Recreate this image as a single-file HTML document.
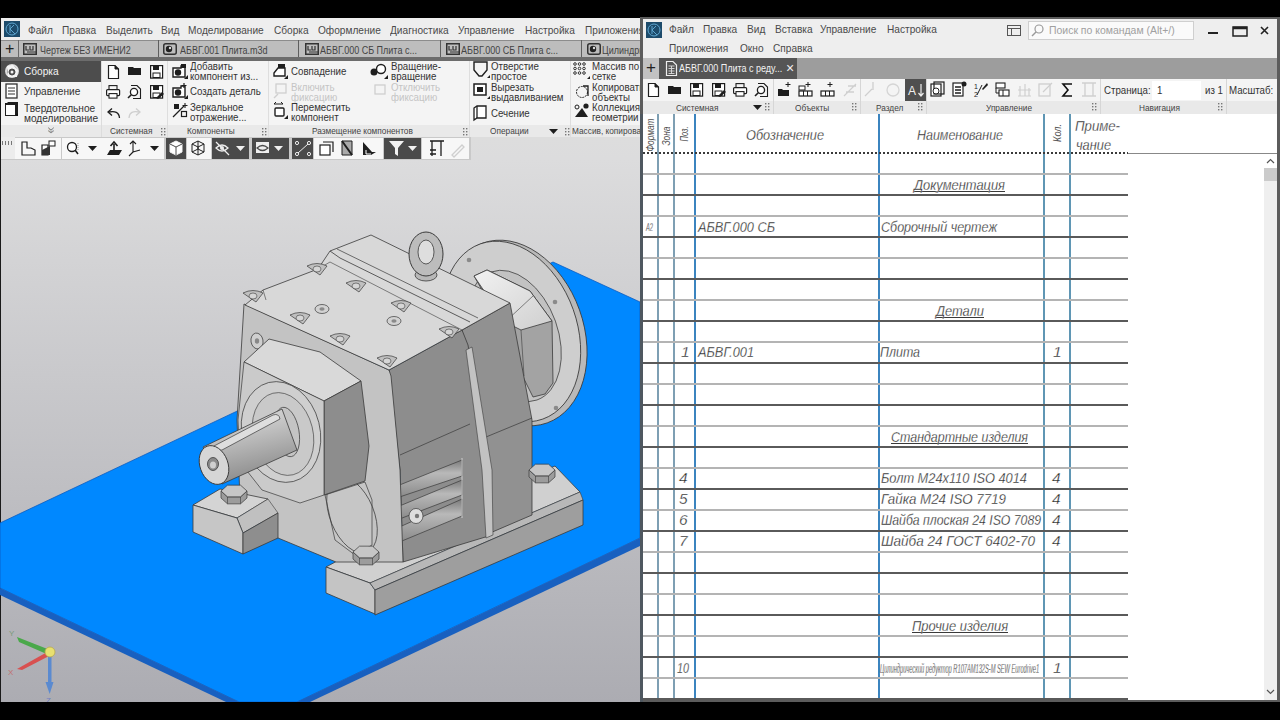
<!DOCTYPE html>
<html><head><meta charset="utf-8">
<style>
*{margin:0;padding:0;box-sizing:border-box}
html,body{width:1280px;height:720px;overflow:hidden;background:#000;font-family:"Liberation Sans",sans-serif}
.a{position:absolute}
.t{position:absolute;white-space:nowrap;transform-origin:0 50%}
.g{position:absolute;white-space:nowrap;transform-origin:0 50%;font-style:italic;color:#2a2a2a;-webkit-text-stroke:0.3px #fff}
.gr{position:absolute;white-space:nowrap;transform-origin:50% 50%;font-style:italic;color:#2a2a2a}
svg{position:absolute;left:0;top:0}
</style></head><body>

<div class="a" style="left:0px;top:0px;width:640px;height:18px;background:#000;"></div>
<div class="a" style="left:0px;top:18px;width:1px;height:684px;background:#1a1a1a;"></div>
<div class="a" style="left:1px;top:18px;width:639px;height:22px;background:#eeeeee;"></div>
<div class="a" style="left:4px;top:21px;width:16px;height:16px;background:#1d4b6b;"></div>
<svg width="1280" height="720" style="pointer-events:none"><circle cx="12" cy="29" r="6" fill="none" stroke="#5ea6d0" stroke-width="1"></circle><path d="M10 25 V33 M10 29 L14 25 M10 29 L15 34" stroke="#5ea6d0" stroke-width="1" fill="none"></path></svg>
<div class="t" style="left:28px;top:23.9px;font-size:11px;line-height:13.2px;color:#4a4a4a;transform:scaleX(0.92);">Файл</div>
<div class="t" style="left:62px;top:23.9px;font-size:11px;line-height:13.2px;color:#4a4a4a;transform:scaleX(0.92);">Правка</div>
<div class="t" style="left:106px;top:23.9px;font-size:11px;line-height:13.2px;color:#4a4a4a;transform:scaleX(0.92);">Выделить</div>
<div class="t" style="left:161px;top:23.9px;font-size:11px;line-height:13.2px;color:#4a4a4a;transform:scaleX(0.92);">Вид</div>
<div class="t" style="left:188px;top:23.9px;font-size:11px;line-height:13.2px;color:#4a4a4a;transform:scaleX(0.92);">Моделирование</div>
<div class="t" style="left:274px;top:23.9px;font-size:11px;line-height:13.2px;color:#4a4a4a;transform:scaleX(0.92);">Сборка</div>
<div class="t" style="left:318px;top:23.9px;font-size:11px;line-height:13.2px;color:#4a4a4a;transform:scaleX(0.92);">Оформление</div>
<div class="t" style="left:390px;top:23.9px;font-size:11px;line-height:13.2px;color:#4a4a4a;transform:scaleX(0.92);">Диагностика</div>
<div class="t" style="left:458px;top:23.9px;font-size:11px;line-height:13.2px;color:#4a4a4a;transform:scaleX(0.92);">Управление</div>
<div class="t" style="left:525px;top:23.9px;font-size:11px;line-height:13.2px;color:#4a4a4a;transform:scaleX(0.92);">Настройка</div>
<div class="t" style="left:585px;top:23.9px;font-size:11px;line-height:13.2px;color:#4a4a4a;transform:scaleX(0.92);">Приложения</div>
<div class="a" style="left:1px;top:40px;width:639px;height:17px;background:#bdbdbd;"></div>
<div class="a" style="left:1px;top:40px;width:639px;height:1px;background:#8c8c8c;"></div>
<div class="a" style="left:18px;top:40px;width:1px;height:17px;background:#6a6a6a;"></div>
<div class="t" style="left:5px;top:40px;font-size:16px;line-height:17px;color:#222">+</div>
<svg width="640" height="60"><rect x="23.75" y="43.75" width="12.5" height="10.5" fill="none" stroke="#333" stroke-width="1.5"></rect><path d="M26 46 V50 H29 M30 46 V50 H33 V46 M27 52 H36" fill="none" stroke="#333" stroke-width="1.2"></path></svg>
<div class="t" style="left:40px;top:44.5px;font-size:10px;line-height:12.0px;color:#444;transform:scaleX(0.9);">Чертеж БЕЗ ИМЕНИ2</div>
<div class="a" style="left:158px;top:40px;width:1px;height:17px;background:#5e5e5e;"></div>
<svg width="640" height="60"><rect x="163.75" y="43.75" width="12.5" height="10.5" rx="2" fill="none" stroke="#333" stroke-width="1.5"></rect><circle cx="169" cy="49" r="3.2" fill="#222"></circle><circle cx="170" cy="48" r="1.2" fill="#ddd"></circle></svg>
<div class="t" style="left:180px;top:44.5px;font-size:10px;line-height:12.0px;color:#444;transform:scaleX(0.9);">АБВГ.001 Плита.m3d</div>
<div class="a" style="left:298px;top:40px;width:1px;height:17px;background:#5e5e5e;"></div>
<svg width="640" height="60"><rect x="305.75" y="43.75" width="12.5" height="10.5" fill="none" stroke="#333" stroke-width="1.5"></rect><path d="M308 46 V50 H311 M312 46 V50 H315 V46 M309 52 H318" fill="none" stroke="#333" stroke-width="1.2"></path></svg>
<div class="t" style="left:320px;top:44.5px;font-size:10px;line-height:12.0px;color:#444;transform:scaleX(0.9);">АБВГ.000 СБ Плита с...</div>
<div class="a" style="left:440px;top:40px;width:1px;height:17px;background:#5e5e5e;"></div>
<svg width="640" height="60"><rect x="446.75" y="43.75" width="12.5" height="10.5" fill="none" stroke="#333" stroke-width="1.5"></rect><path d="M449 46 V50 H452 M453 46 V50 H456 V46 M450 52 H459" fill="none" stroke="#333" stroke-width="1.2"></path></svg>
<div class="t" style="left:461px;top:44.5px;font-size:10px;line-height:12.0px;color:#444;transform:scaleX(0.9);">АБВГ.000 СБ Плита с...</div>
<div class="a" style="left:581px;top:40px;width:1px;height:17px;background:#5e5e5e;"></div>
<svg width="640" height="60"><rect x="587.75" y="43.75" width="12.5" height="10.5" rx="2" fill="none" stroke="#333" stroke-width="1.5"></rect><circle cx="593" cy="49" r="3.2" fill="#222"></circle><circle cx="594" cy="48" r="1.2" fill="#ddd"></circle></svg>
<div class="t" style="left:602px;top:44.5px;font-size:10px;line-height:12.0px;color:#444;transform:scaleX(0.9);">Цилиндрический</div>
<div class="a" style="left:700px;top:40px;width:1px;height:17px;background:#5e5e5e;"></div>
<div class="a" style="left:1px;top:57px;width:639px;height:4px;background:#6c6c6c;"></div>
<div class="a" style="left:1px;top:61px;width:639px;height:76px;background:#f4f4f4;"></div>
<div class="a" style="left:1px;top:125px;width:639px;height:12px;background:#e9e9e9;"></div>
<div class="a" style="left:1px;top:61px;width:100px;height:21px;background:#4d4d4d;"></div>
<div class="a" style="left:101px;top:61px;width:1px;height:76px;background:#dcdcdc;"></div>
<div class="a" style="left:167px;top:61px;width:1px;height:76px;background:#dedede;"></div>
<div class="a" style="left:268px;top:61px;width:1px;height:76px;background:#dedede;"></div>
<div class="a" style="left:469px;top:61px;width:1px;height:76px;background:#dedede;"></div>
<div class="a" style="left:570px;top:61px;width:1px;height:76px;background:#dedede;"></div>
<div class="t" style="left:24px;top:65.4px;font-size:11px;line-height:13.2px;color:#f4f4f4;transform:scaleX(0.92);">Сборка</div>
<div class="t" style="left:24px;top:85.4px;font-size:11px;line-height:13.2px;color:#333;transform:scaleX(0.92);">Управление</div>
<div class="t" style="left:24px;top:102.4px;font-size:11px;line-height:13.2px;color:#333;transform:scaleX(0.92);">Твердотельное</div>
<div class="t" style="left:24px;top:111.9px;font-size:11px;line-height:13.2px;color:#333;transform:scaleX(0.92);">моделирование</div>
<div class="t" style="left:48px;top:124.6px;font-size:9px;line-height:10.8px;color:#777;transform:scaleX(1);transform:rotate(90deg);transform-origin:50% 50%">»</div>
<div class="a" style="left:5px;top:64px;width:14px;height:14px;background:none;border:2px solid #ddd;border-radius:50%"></div>
<div class="a" style="left:6px;top:85px;width:11px;height:13px;background:#f4f4f4;border:1.5px solid #555"></div>
<div class="a" style="left:5px;top:103px;width:13px;height:13px;background:#fff;border:2px solid #111;box-shadow:inset 3px 3px 0 #111"></div>
<div class="t" style="left:110px;top:125.6px;font-size:9px;line-height:10.8px;color:#444;transform:scaleX(0.92);">Системная</div>
<div class="t" style="left:187px;top:125.6px;font-size:9px;line-height:10.8px;color:#444;transform:scaleX(0.92);">Компоненты</div>
<div class="t" style="left:312px;top:125.6px;font-size:9px;line-height:10.8px;color:#444;transform:scaleX(0.92);">Размещение компонентов</div>
<div class="t" style="left:490px;top:125.6px;font-size:9px;line-height:10.8px;color:#444;transform:scaleX(0.92);">Операции</div>
<div class="t" style="left:572px;top:125.6px;font-size:9px;line-height:10.8px;color:#444;transform:scaleX(0.92);">Массив, копирование</div>
<div class="t" style="left:190px;top:61.0px;font-size:10px;line-height:12.0px;color:#333;transform:scaleX(0.97);">Добавить</div>
<div class="t" style="left:190px;top:71.0px;font-size:10px;line-height:12.0px;color:#333;transform:scaleX(0.97);">компонент из...</div>
<div class="t" style="left:190px;top:86.0px;font-size:10px;line-height:12.0px;color:#333;transform:scaleX(0.97);">Создать деталь</div>
<div class="t" style="left:190px;top:102.0px;font-size:10px;line-height:12.0px;color:#333;transform:scaleX(0.97);">Зеркальное</div>
<div class="t" style="left:190px;top:112.0px;font-size:10px;line-height:12.0px;color:#333;transform:scaleX(0.97);">отражение...</div>
<div class="t" style="left:291px;top:66.0px;font-size:10px;line-height:12.0px;color:#333;transform:scaleX(0.97);">Совпадение</div>
<div class="t" style="left:291px;top:82.0px;font-size:10px;line-height:12.0px;color:#c4c4c4;transform:scaleX(0.97);">Включить</div>
<div class="t" style="left:291px;top:92.0px;font-size:10px;line-height:12.0px;color:#c4c4c4;transform:scaleX(0.97);">фиксацию</div>
<div class="t" style="left:291px;top:102.0px;font-size:10px;line-height:12.0px;color:#333;transform:scaleX(0.97);">Переместить</div>
<div class="t" style="left:291px;top:112.0px;font-size:10px;line-height:12.0px;color:#333;transform:scaleX(0.97);">компонент</div>
<div class="t" style="left:391px;top:61.0px;font-size:10px;line-height:12.0px;color:#333;transform:scaleX(0.97);">Вращение-</div>
<div class="t" style="left:391px;top:71.0px;font-size:10px;line-height:12.0px;color:#333;transform:scaleX(0.97);">вращение</div>
<div class="t" style="left:391px;top:82.0px;font-size:10px;line-height:12.0px;color:#c4c4c4;transform:scaleX(0.97);">Отключить</div>
<div class="t" style="left:391px;top:92.0px;font-size:10px;line-height:12.0px;color:#c4c4c4;transform:scaleX(0.97);">фиксацию</div>
<div class="t" style="left:491px;top:61.0px;font-size:10px;line-height:12.0px;color:#333;transform:scaleX(0.97);">Отверстие</div>
<div class="t" style="left:491px;top:71.0px;font-size:10px;line-height:12.0px;color:#333;transform:scaleX(0.97);">простое</div>
<div class="t" style="left:491px;top:82.0px;font-size:10px;line-height:12.0px;color:#333;transform:scaleX(0.97);">Вырезать</div>
<div class="t" style="left:491px;top:92.0px;font-size:10px;line-height:12.0px;color:#333;transform:scaleX(0.97);">выдавливанием</div>
<div class="t" style="left:491px;top:108.0px;font-size:10px;line-height:12.0px;color:#333;transform:scaleX(0.97);">Сечение</div>
<div class="t" style="left:592px;top:61.0px;font-size:10px;line-height:12.0px;color:#333;transform:scaleX(0.97);">Массив по</div>
<div class="t" style="left:592px;top:71.0px;font-size:10px;line-height:12.0px;color:#333;transform:scaleX(0.97);">сетке</div>
<div class="t" style="left:592px;top:82.0px;font-size:10px;line-height:12.0px;color:#333;transform:scaleX(0.97);">Копировать</div>
<div class="t" style="left:592px;top:92.0px;font-size:10px;line-height:12.0px;color:#333;transform:scaleX(0.97);">объекты</div>
<div class="t" style="left:592px;top:102.0px;font-size:10px;line-height:12.0px;color:#333;transform:scaleX(0.97);">Коллекция</div>
<div class="t" style="left:592px;top:112.0px;font-size:10px;line-height:12.0px;color:#333;transform:scaleX(0.97);">геометрии</div>
<div class="a" style="left:1px;top:137px;width:639px;height:565px;background:linear-gradient(#dddddd,#dcdcdd 4%,#acacb2);"></div>
<div class="a" style="left:1px;top:137px;width:470px;height:23px;background:#c9c9c9;"></div>
<div class="a" style="left:1px;top:137px;width:14px;height:22px;background:#ececec;"></div>
<div class="a" style="left:15px;top:138px;width:46px;height:21px;background:#f7f7f7;"></div>
<div class="a" style="left:62px;top:138px;width:102px;height:21px;background:#f7f7f7;"></div>
<div class="a" style="left:166px;top:138px;width:20px;height:21px;background:#4a4a4a;"></div>
<div class="a" style="left:187px;top:138px;width:24px;height:21px;background:#f7f7f7;"></div>
<div class="a" style="left:212px;top:138px;width:37px;height:21px;background:#4a4a4a;"></div>
<div class="a" style="left:252px;top:138px;width:37px;height:21px;background:#4a4a4a;"></div>
<div class="a" style="left:292px;top:138px;width:21px;height:21px;background:#4a4a4a;"></div>
<div class="a" style="left:314px;top:138px;width:69px;height:21px;background:#f7f7f7;"></div>
<div class="a" style="left:384px;top:138px;width:37px;height:21px;background:#4a4a4a;"></div>
<div class="a" style="left:422px;top:138px;width:47px;height:21px;background:#f7f7f7;"></div>
<div class="a" style="left:2px;top:141px;width:11px;height:4px;background:none;background:repeating-linear-gradient(90deg,#777 0 1px,transparent 1px 3px)"></div>
<svg width="640" height="170"><path d="M108.5 65.5 H115 L118.5 69 V78.5 H108.5 Z" fill="#fff" stroke="#1e1e1e" stroke-width="1.2"></path><path d="M115 65.5 V69 H118.5" fill="#1e1e1e" stroke="#1e1e1e"></path><path d="M128 67 H133 L134 68 H141 V75 H128 Z" fill="#1e1e1e"></path><rect x="150.6" y="65.6" width="12" height="12.5" fill="#fff" stroke="#1e1e1e" stroke-width="1.2"></rect><rect x="153" y="66" width="6" height="4" fill="#1e1e1e"></rect><rect x="153" y="73" width="7" height="4.5" fill="none" stroke="#1e1e1e" stroke-width="1"></rect><rect x="109" y="85.6" width="8" height="4" fill="none" stroke="#1e1e1e" stroke-width="1.1"></rect><rect x="106.6" y="89.6" width="13" height="6" rx="1" fill="#fff" stroke="#1e1e1e" stroke-width="1.2"></rect><rect x="109" y="93.6" width="8" height="4.5" fill="#fff" stroke="#1e1e1e" stroke-width="1.1"></rect><path d="M131 85.5 H137 L140.5 89 V98.5 H133" fill="none" stroke="#1e1e1e" stroke-width="1.1"></path><circle cx="134" cy="92" r="3.6" fill="#fff" stroke="#1e1e1e" stroke-width="1.3"></circle><path d="M131.3 94.7 L128 98" stroke="#1e1e1e" stroke-width="1.6"></path><rect x="150.6" y="85.6" width="12" height="12.5" fill="#fff" stroke="#1e1e1e" stroke-width="1.2"></rect><rect x="153" y="86" width="6" height="4" fill="#1e1e1e"></rect><rect x="153" y="93" width="7" height="4.5" fill="none" stroke="#1e1e1e" stroke-width="1"></rect><path d="M156 98 L162 92 L164 94 L158 99 Z" fill="#1e1e1e"></path><path d="M119.5 118 C119 112 115 111 109 112" fill="none" stroke="#1e1e1e" stroke-width="1.3"></path><path d="M112 108.5 L108 112 L112 115.5" fill="none" stroke="#1e1e1e" stroke-width="1.3"></path><path d="M129 118 C129.5 112 133 111 139 112" fill="none" stroke="#cfcfcf" stroke-width="1.3"></path><path d="M136 108.5 L140 112 L136 115.5" fill="none" stroke="#cfcfcf" stroke-width="1.3"></path><path d="M173 68 H181 V66 H185 V77 H173 Z" fill="#fff" stroke="#1e1e1e" stroke-width="1.4"></path><circle cx="178" cy="72.5" r="3.2" fill="#1e1e1e"></circle><path d="M184 79 L188 75 V79 Z" fill="#1e1e1e"></path><rect x="181" y="64" width="5" height="4" fill="#1e1e1e"></rect><path d="M173 88 H181 V86 H185 V97 H173 Z" fill="#fff" stroke="#1e1e1e" stroke-width="1.4"></path><circle cx="178" cy="92.5" r="3.2" fill="#1e1e1e"></circle><path d="M184 99 L188 95 V99 Z" fill="#1e1e1e"></path><path d="M184 83 V88 M181.5 85.5 H186.5" stroke="#1e1e1e" stroke-width="1.2"></path><rect x="174" y="104" width="5" height="5" fill="#1e1e1e"></rect><path d="M173 117 L184 106" stroke="#1e1e1e" stroke-width="1.3"></path><rect x="181.5" y="111.5" width="5" height="5" fill="none" stroke="#1e1e1e" stroke-width="1.2"></rect><path d="M185 103 V108 M182.5 105.5 H187.5" stroke="#1e1e1e" stroke-width="1.1"></path><path d="M274 73 L278 68 H285 V76 H274 Z" fill="#fff" stroke="#1e1e1e" stroke-width="1.4"></path><path d="M278 64 H285 V68 H278 Z" fill="#1e1e1e"></path><path d="M284 79 L288 75 V79 Z" fill="#1e1e1e"></path><rect x="276" y="84" width="10" height="9" fill="none" stroke="#cfcfcf" stroke-width="1.3"></rect><path d="M274 98 L278 94" stroke="#cfcfcf" stroke-width="1.5"></path><path d="M274 104 H283 M274 104 L276 102 M283 104 L281 102" stroke="#1e1e1e" stroke-width="1"></path><rect x="275" y="108" width="9" height="8" rx="1" fill="#fff" stroke="#1e1e1e" stroke-width="1.4"></rect><path d="M284 119 L288 115 V119 Z" fill="#1e1e1e"></path><circle cx="374" cy="72" r="3.5" fill="#1e1e1e"></circle><circle cx="381" cy="69" r="4.5" fill="#fff" stroke="#1e1e1e" stroke-width="1.4"></circle><path d="M384 79 L388 75 V79 Z" fill="#1e1e1e"></path><rect x="375" y="85" width="10" height="9" fill="none" stroke="#cfcfcf" stroke-width="1.3"></rect><path d="M474 62 H487 V70 L482 76 H479 L474 70 Z" fill="none" stroke="#1e1e1e" stroke-width="1.4"></path><path d="M487 78 L490 75 V78 Z" fill="#1e1e1e"></path><rect x="474" y="84" width="12" height="11" fill="#fff" stroke="#1e1e1e" stroke-width="1.5"></rect><rect x="477" y="87" width="6" height="5" fill="#1e1e1e"></rect><path d="M487 99 L490 96 V99 Z" fill="#1e1e1e"></path><path d="M474 108 L477 106 H486 V118 H477 L474 120 Z" fill="#fff" stroke="#1e1e1e" stroke-width="1.3"></path><path d="M477 106 V118" stroke="#1e1e1e" stroke-width="1.3"></path><circle cx="575.0" cy="64.0" r="1.3" fill="none" stroke="#1e1e1e" stroke-width="0.9"></circle><circle cx="575.0" cy="68.5" r="1.3" fill="none" stroke="#1e1e1e" stroke-width="0.9"></circle><circle cx="575.0" cy="73.0" r="1.3" fill="none" stroke="#1e1e1e" stroke-width="0.9"></circle><circle cx="579.5" cy="64.0" r="1.3" fill="none" stroke="#1e1e1e" stroke-width="0.9"></circle><circle cx="579.5" cy="68.5" r="1.3" fill="none" stroke="#1e1e1e" stroke-width="0.9"></circle><circle cx="579.5" cy="73.0" r="1.3" fill="none" stroke="#1e1e1e" stroke-width="0.9"></circle><circle cx="584.0" cy="64.0" r="1.3" fill="none" stroke="#1e1e1e" stroke-width="0.9"></circle><circle cx="584.0" cy="68.5" r="1.3" fill="none" stroke="#1e1e1e" stroke-width="0.9"></circle><circle cx="584.0" cy="73.0" r="1.3" fill="none" stroke="#1e1e1e" stroke-width="0.9"></circle><path d="M587 79 L590 76 V79 Z" fill="#1e1e1e"></path><circle cx="582" cy="92" r="5.5" fill="none" stroke="#1e1e1e" stroke-width="1" stroke-dasharray="2 1"></circle><path d="M583 86 H588 V96" fill="none" stroke="#1e1e1e" stroke-width="1.3"></path><circle cx="586" cy="106" r="2.6" fill="#1e1e1e"></circle><path d="M575 117 L582 108 L588 117 Z" fill="#1e1e1e"></path><circle cx="577" cy="107" r="2" fill="none" stroke="#1e1e1e"></circle><path d="M7 66 L13 65 L18 70 L17 77 L8 77 Z" fill="#f4f4f4"></path><circle cx="12" cy="72" r="3" fill="#4d4d4d" stroke="#4d4d4d"></circle><circle cx="12" cy="72" r="1.5" fill="#f4f4f4"></circle><rect x="6" y="84" width="11" height="14" fill="#fff" stroke="#333" stroke-width="1.3"></rect><path d="M8 88 H15 M8 91 H15 M8 94 H15" stroke="#333" stroke-width="1.2"></path><path d="M5 105 L8 102 H18 V113 L15 116 H5 Z" fill="#1e1e1e"></path><rect x="6" y="105" width="9" height="10" fill="#fff"></rect><path d="M48 127.5 L51 130 L54 127.5 M48 130.5 L51 133 L54 130.5" fill="none" stroke="#888" stroke-width="0.9"></path><rect x="161" y="128" width="1.4" height="1.4" fill="#777"></rect><rect x="161" y="131" width="1.4" height="1.4" fill="#777"></rect><rect x="161" y="134" width="1.4" height="1.4" fill="#777"></rect><rect x="164" y="128" width="1.4" height="1.4" fill="#777"></rect><rect x="164" y="131" width="1.4" height="1.4" fill="#777"></rect><rect x="164" y="134" width="1.4" height="1.4" fill="#777"></rect><rect x="262" y="128" width="1.4" height="1.4" fill="#777"></rect><rect x="262" y="131" width="1.4" height="1.4" fill="#777"></rect><rect x="262" y="134" width="1.4" height="1.4" fill="#777"></rect><rect x="265" y="128" width="1.4" height="1.4" fill="#777"></rect><rect x="265" y="131" width="1.4" height="1.4" fill="#777"></rect><rect x="265" y="134" width="1.4" height="1.4" fill="#777"></rect><rect x="463" y="128" width="1.4" height="1.4" fill="#777"></rect><rect x="463" y="131" width="1.4" height="1.4" fill="#777"></rect><rect x="463" y="134" width="1.4" height="1.4" fill="#777"></rect><rect x="466" y="128" width="1.4" height="1.4" fill="#777"></rect><rect x="466" y="131" width="1.4" height="1.4" fill="#777"></rect><rect x="466" y="134" width="1.4" height="1.4" fill="#777"></rect><rect x="565" y="128" width="1.4" height="1.4" fill="#777"></rect><rect x="565" y="131" width="1.4" height="1.4" fill="#777"></rect><rect x="565" y="134" width="1.4" height="1.4" fill="#777"></rect><rect x="568" y="128" width="1.4" height="1.4" fill="#777"></rect><rect x="568" y="131" width="1.4" height="1.4" fill="#777"></rect><rect x="568" y="134" width="1.4" height="1.4" fill="#777"></rect><path d="M549 129 H558 L553.5 134 Z" fill="#1e1e1e"></path><path d="M22 142 V155 H35 V150 L31 148 H27 V142 Z" fill="none" stroke="#1e1e1e" stroke-width="1.2"></path><path d="M42 145 H48 V155 H42 Z" fill="#fff" stroke="#1e1e1e" stroke-width="1.2"></path><path d="M42 150 L50 146 V155 H42" fill="#333"></path><rect x="49" y="141" width="6" height="5" fill="#fff" stroke="#1e1e1e" stroke-width="1"></rect><circle cx="72" cy="147" r="4.5" fill="#fff" stroke="#1e1e1e" stroke-width="1.3"></circle><path d="M75 150 L78 154" stroke="#1e1e1e" stroke-width="1.6"></path><path d="M78 143 V151" stroke="#999" stroke-dasharray="1 1"></path><path d="M88 146 H97 L92.5 151 Z" fill="#1e1e1e"></path><path d="M107 155 L110 150 H122 L119 155 Z" fill="#1e1e1e"></path><path d="M114 152 V144 M110.5 146 L114 142 L117.5 146" fill="none" stroke="#1e1e1e" stroke-width="1.6"></path><path d="M133 152 V141 M130 144 L133 141 L136 144 M133 152 L140 150 M133 152 L129 156" fill="none" stroke="#1e1e1e" stroke-width="1.1"></path><path d="M150 146 H159 L154.5 151 Z" fill="#1e1e1e"></path><path d="M170 144 L176 141 L182 144 V152 L176 155 L170 152 Z" fill="#fff" stroke="#f4f4f4" stroke-width="1"></path><path d="M170 144 L176 147 L182 144 M176 147 V155" fill="none" stroke="#4a4a4a" stroke-width="1"></path><path d="M192 144 L198 141 L204 144 V152 L198 155 L192 152 Z M192 144 L198 147 L204 144 M198 147 V155 M192 152 L198 149 L204 152 M198 141 V149" fill="none" stroke="#1e1e1e" stroke-width="1"></path><path d="M216 148 Q222 142 228 148 Q222 154 216 148 Z" fill="none" stroke="#eee" stroke-width="1.3"></path><circle cx="222" cy="148" r="2" fill="#eee"></circle><path d="M216 142 L229 155" stroke="#eee" stroke-width="1.2"></path><path d="M236 146 H245 L240.5 151 Z" fill="#f0f0f0"></path><rect x="256" y="142" width="13" height="11" fill="#eee"></rect><path d="M257 148 Q262.5 143 268 148 Q262.5 153 257 148 Z" fill="none" stroke="#4a4a4a" stroke-width="1.2"></path><path d="M274 146 H283 L278.5 151 Z" fill="#f0f0f0"></path><circle cx="297" cy="143" r="1.6" fill="none" stroke="#eee"></circle><circle cx="309" cy="143" r="1.6" fill="none" stroke="#eee"></circle><circle cx="297" cy="154" r="1.6" fill="none" stroke="#eee"></circle><circle cx="309" cy="154" r="1.6" fill="none" stroke="#eee"></circle><path d="M298 153 L308 144" stroke="#eee"></path><rect x="320" y="145" width="10" height="10" fill="#fff" stroke="#1e1e1e" stroke-width="1.2"></rect><path d="M323 142 H333 V152" fill="none" stroke="#1e1e1e" stroke-width="1.2"></path><path d="M342 141 H352 V155 H342 Z" fill="#aaa" stroke="#1e1e1e"></path><path d="M342 141 L352 155" stroke="#1e1e1e" stroke-width="2"></path><path d="M363 155 V142 L372 152 H376 L371 155 Z" fill="#1e1e1e"></path><path d="M366 150 V154 H371" stroke="#fff" fill="none"></path><path d="M389 141 H404 L398 148 V156 L395 154 V148 Z" fill="#f2f2f2"></path><path d="M408 146 H417 L412.5 151 Z" fill="#f0f0f0"></path><path d="M430 141 H444 M432 141 V156 M441 141 V156 M430 154 H436 M430 150 H436" stroke="#1e1e1e" stroke-width="1.3" fill="none"></path><path d="M452 155 L462 145 L464 147 L454 157 Z" fill="none" stroke="#cfcfcf" stroke-width="1.3"></path></svg>
<svg width="640" height="720" style="position:absolute;left:0;top:0">
<defs><linearGradient id="shaft" x1="0" y1="0" x2="0.3" y2="1"><stop offset="0" stop-color="#dcdcdc"></stop><stop offset="0.35" stop-color="#c8c8c8"></stop><stop offset="1" stop-color="#8c8c8c"></stop></linearGradient><linearGradient id="cone" x1="0" y1="0" x2="1" y2="1"><stop offset="0" stop-color="#f2f2f2"></stop><stop offset="1" stop-color="#cfcfcf"></stop></linearGradient></defs>
<polygon points="0,523 553,262 640,302 640,538 297,702 239,702 0,588" fill="#0088ff" stroke="#0a5cc0" stroke-width="0.8" stroke-linejoin="round"></polygon>
<polygon points="0,588 239,702 226,702 0,595" fill="#1860c0" stroke="none" stroke-width="0.8" stroke-linejoin="round"></polygon>
<polygon points="297,702 640,538 640,546 310,702" fill="#1860c0" stroke="none" stroke-width="0.8" stroke-linejoin="round"></polygon>
<ellipse cx="515" cy="333" rx="68.5" ry="95.5" fill="#b9b9b9" stroke="#3a3a3a" stroke-width="0.8" transform="rotate(-19.7 515 333)"></ellipse>
<ellipse cx="511.5" cy="331.5" rx="65.5" ry="93" fill="#cecece" stroke="#3a3a3a" stroke-width="0.8" transform="rotate(-19.7 511.5 331.5)"></ellipse>
<ellipse cx="514" cy="336" rx="44" ry="68" fill="#c2c2c2" stroke="#3a3a3a" stroke-width="0.7" transform="rotate(-19.7 514 336)"></ellipse>
<circle cx="469" cy="260" r="2.3" fill="#8a8a8a"></circle><circle cx="555" cy="302" r="2.3" fill="#8a8a8a"></circle><circle cx="556" cy="408" r="2.3" fill="#8a8a8a"></circle>
<polygon points="474,276 487,270 530,291 552,321 553,383 545,394 533,397 522,375 505,330" fill="#a3a3a3" stroke="#3a3a3a" stroke-width="0.8" stroke-linejoin="round"></polygon>
<polygon points="474,276 487,270 530,291 552,321 521,330 505,322" fill="url(#cone)" stroke="#3a3a3a" stroke-width="0.8" stroke-linejoin="round"></polygon>
<polyline points="505,322 533,296" fill="none" stroke="#3a3a3a" stroke-width="0.6"></polyline>
<polyline points="521,330 524,376" fill="none" stroke="#3a3a3a" stroke-width="0.6"></polyline>
<polygon points="326,567 365,546 555,466 580,492 370,583" fill="#d0d0d0" stroke="#3a3a3a" stroke-width="0.8" stroke-linejoin="round"></polygon>
<polygon points="326,567 370,583 375,590 375,614 326,593" fill="#c4c4c4" stroke="#3a3a3a" stroke-width="0.8" stroke-linejoin="round"></polygon>
<polygon points="370,583 580,492 583,500 375,590" fill="#b8b8b8" stroke="#3a3a3a" stroke-width="0.6" stroke-linejoin="round"></polygon>
<polygon points="375,590 583,500 583,525 375,615" fill="#9e9e9e" stroke="#3a3a3a" stroke-width="0.8" stroke-linejoin="round"></polygon>
<polygon points="462,330 510,303 532,420 532,515 490,533 480,440" fill="#919191" stroke="#3a3a3a" stroke-width="0.8" stroke-linejoin="round"></polygon>
<polyline points="486,437 532,418" fill="none" stroke="#3a3a3a" stroke-width="0.7"></polyline>
<polygon points="389,370 462,330 468,345 490,470 492,535 403,562 400,470" fill="#8d8d8d" stroke="#3a3a3a" stroke-width="0.8" stroke-linejoin="round"></polygon>
<polygon points="466,350 472,347 492,470 493,535 486,538 482,470" fill="#c2c2c2" stroke="#3a3a3a" stroke-width="0.6" stroke-linejoin="round"></polygon>
<polyline points="400,455 470,424" fill="none" stroke="#3a3a3a" stroke-width="0.7"></polyline>
<linearGradient id="slot" x1="0" y1="0" x2="0" y2="1"><stop offset="0" stop-color="#7a7a7a"></stop><stop offset="0.35" stop-color="#b9b9b9"></stop><stop offset="1" stop-color="#8a8a8a"></stop></linearGradient>
<polygon points="399.5,485 462,460 462,476 399.5,497" fill="url(#slot)" stroke="#3a3a3a" stroke-width="0.7" stroke-linejoin="round"></polygon>
<polygon points="399.5,506 462,480 462,495 399.5,519" fill="url(#slot)" stroke="#3a3a3a" stroke-width="0.7" stroke-linejoin="round"></polygon>
<polygon points="399.5,527 462,499 462,516 399.5,542" fill="url(#slot)" stroke="#3a3a3a" stroke-width="0.7" stroke-linejoin="round"></polygon>
<polyline points="462,458 462,518" fill="none" stroke="#d0d0d0" stroke-width="1"></polyline>
<ellipse cx="416" cy="516" rx="7" ry="7.5" fill="#dedede" stroke="#3a3a3a" stroke-width="0.7" transform="rotate(0 416 516)"></ellipse>
<ellipse cx="417" cy="516" rx="2.2" ry="2.2" fill="#777" stroke="none" stroke-width="0.8" transform="rotate(0 417 516)"></ellipse>
<polygon points="244,304 389,370 391,376 400,470 403,562 336,562 278,538 240,500 237,420" fill="#c3c3c3" stroke="#3a3a3a" stroke-width="0.8" stroke-linejoin="round"></polygon>
<polygon points="245,305 263,290 318,269 330,251 371,235 510,303 462,330 389,370" fill="#d8d8d8" stroke="#3a3a3a" stroke-width="0.8" stroke-linejoin="round"></polygon>
<polyline points="330,251 340,258 470,322" fill="none" stroke="#3a3a3a" stroke-width="0.8"></polyline>
<polyline points="337,249 478,318" fill="none" stroke="#3a3a3a" stroke-width="0.7"></polyline>
<polyline points="318,269 330,262 462,330" fill="none" stroke="#3a3a3a" stroke-width="0.6"></polyline>
<polyline points="263,290 266,300" fill="none" stroke="#3a3a3a" stroke-width="0.6"></polyline>
<ellipse cx="322" cy="309" rx="7" ry="4.5" fill="#d2d2d2" stroke="#3a3a3a" stroke-width="0.7" transform="rotate(0 322 309)"></ellipse><ellipse cx="322" cy="309" rx="2.6" ry="1.7" fill="#8a8a8a" stroke="none" stroke-width="0.8" transform="rotate(0 322 309)"></ellipse>
<ellipse cx="394" cy="321" rx="7" ry="4.5" fill="#d2d2d2" stroke="#3a3a3a" stroke-width="0.7" transform="rotate(0 394 321)"></ellipse><ellipse cx="394" cy="321" rx="2.6" ry="1.7" fill="#8a8a8a" stroke="none" stroke-width="0.8" transform="rotate(0 394 321)"></ellipse>
<path d="M243 293 Q253 288 263 293 L256 302 Z" fill="#c0c0c0" stroke="#3a3a3a" stroke-width="0.7"></path><ellipse cx="253" cy="296" rx="4" ry="3" fill="#d6d6d6" stroke="#3a3a3a" stroke-width="0.6" transform="rotate(0 253 296)"></ellipse>
<path d="M290 315 Q300 310 310 315 L303 324 Z" fill="#c0c0c0" stroke="#3a3a3a" stroke-width="0.7"></path><ellipse cx="300" cy="318" rx="4" ry="3" fill="#d6d6d6" stroke="#3a3a3a" stroke-width="0.6" transform="rotate(0 300 318)"></ellipse>
<path d="M330 336 Q340 331 350 336 L343 345 Z" fill="#c0c0c0" stroke="#3a3a3a" stroke-width="0.7"></path><ellipse cx="340" cy="339" rx="4" ry="3" fill="#d6d6d6" stroke="#3a3a3a" stroke-width="0.6" transform="rotate(0 340 339)"></ellipse>
<path d="M377 358 Q387 353 397 358 L390 367 Z" fill="#c0c0c0" stroke="#3a3a3a" stroke-width="0.7"></path><ellipse cx="387" cy="361" rx="4" ry="3" fill="#d6d6d6" stroke="#3a3a3a" stroke-width="0.6" transform="rotate(0 387 361)"></ellipse>
<path d="M439 329 Q449 324 459 329 L452 338 Z" fill="#c0c0c0" stroke="#3a3a3a" stroke-width="0.7"></path><ellipse cx="449" cy="332" rx="4" ry="3" fill="#d6d6d6" stroke="#3a3a3a" stroke-width="0.6" transform="rotate(0 449 332)"></ellipse>
<path d="M391 303 Q401 298 411 303 L404 312 Z" fill="#c0c0c0" stroke="#3a3a3a" stroke-width="0.7"></path><ellipse cx="401" cy="306" rx="4" ry="3" fill="#d6d6d6" stroke="#3a3a3a" stroke-width="0.6" transform="rotate(0 401 306)"></ellipse>
<path d="M346 283 Q356 278 366 283 L359 292 Z" fill="#c0c0c0" stroke="#3a3a3a" stroke-width="0.7"></path><ellipse cx="356" cy="286" rx="4" ry="3" fill="#d6d6d6" stroke="#3a3a3a" stroke-width="0.6" transform="rotate(0 356 286)"></ellipse>
<path d="M307 266 Q317 261 327 266 L320 275 Z" fill="#c0c0c0" stroke="#3a3a3a" stroke-width="0.7"></path><ellipse cx="317" cy="269" rx="4" ry="3" fill="#d6d6d6" stroke="#3a3a3a" stroke-width="0.6" transform="rotate(0 317 269)"></ellipse>
<ellipse cx="426" cy="275" rx="11" ry="6" fill="#b8b8b8" stroke="#3a3a3a" stroke-width="0.8" transform="rotate(0 426 275)"></ellipse>
<ellipse cx="426" cy="254" rx="17" ry="22" fill="#bcbcbc" stroke="#3a3a3a" stroke-width="1" transform="rotate(0 426 254)"></ellipse>
<ellipse cx="426" cy="252" rx="8" ry="12" fill="#dedede" stroke="#3a3a3a" stroke-width="0.8" transform="rotate(0 426 252)"></ellipse>
<ellipse cx="257" cy="341" rx="6" ry="8" fill="#cfcfcf" stroke="#3a3a3a" stroke-width="0.7" transform="rotate(-10 257 341)"></ellipse>
<ellipse cx="257" cy="341" rx="2.2" ry="2.8" fill="#888" stroke="none" stroke-width="0.8" transform="rotate(0 257 341)"></ellipse>
<polygon points="325,495 365,482 372,500 372,545 355,555 335,540" fill="#c6c6c6" stroke="#3a3a3a" stroke-width="0.7" stroke-linejoin="round"></polygon>
<ellipse cx="352" cy="515" rx="22" ry="40" fill="none" stroke="#3a3a3a" stroke-width="0.7" transform="rotate(-22 352 515)"></ellipse>
<polygon points="244,362 269,339 320,352 361,381 324,401" fill="#d9d9d9" stroke="#3a3a3a" stroke-width="0.8" stroke-linejoin="round"></polygon>
<polygon points="324,401 361,381 369,446 365,481 324,495" fill="#8d8d8d" stroke="#3a3a3a" stroke-width="0.8" stroke-linejoin="round"></polygon>
<polygon points="244,362 324,401 324,495 300,503 262,490 240,462 238,420" fill="#cacaca" stroke="#3a3a3a" stroke-width="0.7" stroke-linejoin="round"></polygon>
<ellipse cx="281" cy="432" rx="39" ry="51" fill="#cfcfcf" stroke="#3a3a3a" stroke-width="0.7" transform="rotate(-14 281 432)"></ellipse>
<ellipse cx="283" cy="434" rx="30" ry="42" fill="#c9c9c9" stroke="#3a3a3a" stroke-width="0.6" transform="rotate(-14 283 434)"></ellipse>
<ellipse cx="287" cy="432" rx="12" ry="25" fill="#c4c4c4" stroke="#3a3a3a" stroke-width="0.7" transform="rotate(-10 287 432)"></ellipse>
<polygon points="203,447 282,409 297,450 222,484" fill="url(#shaft)" stroke="#3a3a3a" stroke-width="0.8" stroke-linejoin="round"></polygon>
<path d="M214 446 L273 415 Q279 413 280 419 L222 450 Q215 452 214 446 Z" fill="#dedede" stroke="#3a3a3a" stroke-width="0.7"></path>
<ellipse cx="214" cy="465" rx="14" ry="20" fill="#d6d6d6" stroke="#3a3a3a" stroke-width="0.9" transform="rotate(-20 214 465)"></ellipse>
<ellipse cx="213" cy="464" rx="5.5" ry="6.5" fill="#8a8a8a" stroke="#3a3a3a" stroke-width="0.8" transform="rotate(0 213 464)"></ellipse>
<ellipse cx="213" cy="465" rx="3" ry="3.5" fill="#cfcfcf" stroke="none" stroke-width="0.8" transform="rotate(0 213 465)"></ellipse>
<polygon points="193,505 220,489 268,499 237,518" fill="#d4d4d4" stroke="#3a3a3a" stroke-width="0.8" stroke-linejoin="round"></polygon>
<polygon points="237,518 268,499 278,513 243,533" fill="#c0c0c0" stroke="#3a3a3a" stroke-width="0.6" stroke-linejoin="round"></polygon>
<polygon points="193,505 237,518 243,533 243,554 193,532" fill="#c6c6c6" stroke="#3a3a3a" stroke-width="0.8" stroke-linejoin="round"></polygon>
<polygon points="243,533 278,513 278,538 243,554" fill="#8e8e8e" stroke="#3a3a3a" stroke-width="0.8" stroke-linejoin="round"></polygon>
<polygon points="221,491 227.5,496.85 240.5,496.85 247,491 247,498 240.5,503.85 227.5,503.85 221,498" fill="#9c9c9c" stroke="#3a3a3a" stroke-width="0.7" stroke-linejoin="round"></polygon><polyline points="227.5,496.85 227.5,503.85" fill="none" stroke="#3a3a3a" stroke-width="0.6"></polyline><polyline points="240.5,496.85 240.5,503.85" fill="none" stroke="#3a3a3a" stroke-width="0.6"></polyline><polygon points="221,491 227.5,485.15 240.5,485.15 247,491 240.5,496.85 227.5,496.85" fill="#c6c6c6" stroke="#3a3a3a" stroke-width="0.7" stroke-linejoin="round"></polygon>
<polygon points="353,552 359.5,557.85 372.5,557.85 379,552 379,559 372.5,564.85 359.5,564.85 353,559" fill="#9c9c9c" stroke="#3a3a3a" stroke-width="0.7" stroke-linejoin="round"></polygon><polyline points="359.5,557.85 359.5,564.85" fill="none" stroke="#3a3a3a" stroke-width="0.6"></polyline><polyline points="372.5,557.85 372.5,564.85" fill="none" stroke="#3a3a3a" stroke-width="0.6"></polyline><polygon points="353,552 359.5,546.15 372.5,546.15 379,552 372.5,557.85 359.5,557.85" fill="#c6c6c6" stroke="#3a3a3a" stroke-width="0.7" stroke-linejoin="round"></polygon>
<polygon points="529,470 535.5,475.85 548.5,475.85 555,470 555,477 548.5,482.85 535.5,482.85 529,477" fill="#9c9c9c" stroke="#3a3a3a" stroke-width="0.7" stroke-linejoin="round"></polygon><polyline points="535.5,475.85 535.5,482.85" fill="none" stroke="#3a3a3a" stroke-width="0.6"></polyline><polyline points="548.5,475.85 548.5,482.85" fill="none" stroke="#3a3a3a" stroke-width="0.6"></polyline><polygon points="529,470 535.5,464.15 548.5,464.15 555,470 548.5,475.85 535.5,475.85" fill="#c6c6c6" stroke="#3a3a3a" stroke-width="0.7" stroke-linejoin="round"></polygon>
<path d="M50 650 L17 637 L19 642 L49 655 Z" fill="#4aa84a"></path><path d="M49 651 L17 669 L22 670 L51 655 Z" fill="#d85050"></path><rect x="48" y="656" width="3.5" height="28" fill="#5a8ad0"></rect><path d="M45.5 682 L53.5 682 L49.7 694 Z" fill="#5a8ad0"></path><circle cx="50" cy="652" r="5" fill="#e8e070" stroke="#b8a850" stroke-width="0.8"></circle>
<text x="9" y="636" font-size="8" fill="#7a9a7a" font-family="Liberation Sans">Y</text><text x="8" y="675" font-size="8" fill="#c07070" font-family="Liberation Sans">X</text><text x="46" y="703" font-size="8" fill="#7080c0" font-family="Liberation Sans">Z</text>
</svg>
<div class="a" style="left:0px;top:702px;width:640px;height:18px;background:#000;"></div>
<div class="a" style="left:640px;top:0;width:640px;height:720px;overflow:hidden">
<div class="a" style="left:0px;top:0px;width:640px;height:17px;background:#000;"></div>
<div class="a" style="left:0px;top:17px;width:640px;height:685px;background:#5c5c5c;"></div>
<div class="a" style="left:3px;top:19px;width:634px;height:39px;background:#eeeeee;"></div>
<div class="a" style="left:6px;top:22px;width:16px;height:16px;background:#1d4b6b;"></div>
<svg width="640" height="100"><circle cx="14" cy="30" r="6" fill="none" stroke="#5ea6d0" stroke-width="1"></circle><path d="M12 26 V34 M12 30 L16 26 M12 30 L17 35" stroke="#5ea6d0" stroke-width="1" fill="none"></path></svg>
<div class="t" style="left:29px;top:23.4px;font-size:11px;line-height:13.2px;color:#4a4a4a;transform:scaleX(0.92);">Файл</div>
<div class="t" style="left:63px;top:23.4px;font-size:11px;line-height:13.2px;color:#4a4a4a;transform:scaleX(0.92);">Правка</div>
<div class="t" style="left:107px;top:23.4px;font-size:11px;line-height:13.2px;color:#4a4a4a;transform:scaleX(0.92);">Вид</div>
<div class="t" style="left:135px;top:23.4px;font-size:11px;line-height:13.2px;color:#4a4a4a;transform:scaleX(0.92);">Вставка</div>
<div class="t" style="left:180px;top:23.4px;font-size:11px;line-height:13.2px;color:#4a4a4a;transform:scaleX(0.92);">Управление</div>
<div class="t" style="left:247px;top:23.4px;font-size:11px;line-height:13.2px;color:#4a4a4a;transform:scaleX(0.92);">Настройка</div>
<div class="t" style="left:29px;top:42.4px;font-size:11px;line-height:13.2px;color:#4a4a4a;transform:scaleX(0.92);">Приложения</div>
<div class="t" style="left:100px;top:42.4px;font-size:11px;line-height:13.2px;color:#4a4a4a;transform:scaleX(0.92);">Окно</div>
<div class="t" style="left:133px;top:42.4px;font-size:11px;line-height:13.2px;color:#4a4a4a;transform:scaleX(0.92);">Справка</div>
<div class="a" style="left:388px;top:21px;width:166px;height:19px;background:#fafafa;border:1px solid #cfcfcf"></div>
<svg width="640" height="60"><circle cx="399" cy="29" r="4" fill="none" stroke="#999" stroke-width="1.2"></circle><path d="M396 32 L392 36" stroke="#999" stroke-width="1.4"></path><rect x="367.5" y="25.5" width="13" height="10" fill="none" stroke="#555"></rect><path d="M368 28.5 H380 M371.5 28 V35" stroke="#555"></path><path d="M568 33 H578" stroke="#222" stroke-width="2"></path><rect x="593" y="27" width="14" height="9" fill="none" stroke="#222" stroke-width="1.5"></rect><path d="M593 28 H607" stroke="#222" stroke-width="2.5"></path><path d="M621 27 L628 34 M628 27 L621 34" stroke="#222" stroke-width="1.6"></path></svg>
<div class="t" style="left:409px;top:23.9px;font-size:11px;line-height:13.2px;color:#a0a0a0;transform:scaleX(0.95);">Поиск по командам (Alt+/)</div>
<div class="a" style="left:3px;top:58px;width:634px;height:21px;background:#9d9d9d;"></div>
<div class="a" style="left:3px;top:58px;width:16px;height:21px;background:#c2c2c2;"></div>
<div class="a" style="left:19px;top:58px;width:138px;height:21px;background:#555555;"></div>
<div class="t" style="left:6px;top:58px;font-size:17px;line-height:20px;color:#222">+</div>
<svg width="640" height="100"><path d="M26.5 61.5 H33 L36.5 65 V75.5 H26.5 Z" fill="none" stroke="#eee" stroke-width="1.2"></path><path d="M28.5 66 H34.5 M28.5 68.5 H34.5 M28.5 71 H34.5 M28.5 73.5 H34.5 M31.5 66 V74" stroke="#ddd" stroke-width="0.9"></path></svg>
<div class="t" style="left:39px;top:63.0px;font-size:10px;line-height:12.0px;color:#f2f2f2;transform:scaleX(0.9);">АБВГ.000 Плита с реду...</div>
<div class="t" style="left:146px;top:60px;font-size:14px;line-height:17px;color:#eee">×</div>
<div class="a" style="left:3px;top:79px;width:634px;height:35px;background:#f4f4f4;"></div>
<div class="a" style="left:3px;top:101px;width:634px;height:13px;background:#e9e9e9;"></div>
<div class="a" style="left:133px;top:79px;width:1px;height:35px;background:#d6d6d6;"></div>
<div class="a" style="left:220px;top:79px;width:1px;height:35px;background:#d6d6d6;"></div>
<div class="a" style="left:286px;top:79px;width:1px;height:35px;background:#d6d6d6;"></div>
<div class="a" style="left:460px;top:79px;width:1px;height:35px;background:#d6d6d6;"></div>
<div class="a" style="left:586px;top:79px;width:1px;height:35px;background:#d6d6d6;"></div>
<div class="t" style="left:36px;top:102.6px;font-size:9px;line-height:10.8px;color:#444;transform:scaleX(0.92);">Системная</div>
<div class="t" style="left:155px;top:102.6px;font-size:9px;line-height:10.8px;color:#444;transform:scaleX(0.92);">Объекты</div>
<div class="t" style="left:236px;top:102.6px;font-size:9px;line-height:10.8px;color:#444;transform:scaleX(0.92);">Раздел</div>
<div class="t" style="left:346px;top:102.6px;font-size:9px;line-height:10.8px;color:#444;transform:scaleX(0.92);">Управление</div>
<div class="t" style="left:499px;top:102.6px;font-size:9px;line-height:10.8px;color:#444;transform:scaleX(0.92);">Навигация</div>
<div class="a" style="left:512px;top:81px;width:49px;height:19px;background:#ffffff;"></div>
<div class="t" style="left:464px;top:84.5px;font-size:10px;line-height:12.0px;color:#333;transform:scaleX(0.97);">Страница:</div>
<div class="t" style="left:517px;top:84.5px;font-size:10px;line-height:12.0px;color:#333;transform:scaleX(0.97);">1</div>
<div class="t" style="left:565px;top:84.5px;font-size:10px;line-height:12.0px;color:#333;transform:scaleX(0.97);">из 1</div>
<div class="t" style="left:589px;top:84.5px;font-size:10px;line-height:12.0px;color:#333;transform:scaleX(0.97);">Масштаб:</div>
<svg width="640" height="120" style="left:0;top:0"><path d="M8.5 83.5 H15 L18.5 87 V96.5 H8.5 Z" fill="#fff" stroke="#1e1e1e" stroke-width="1.2"></path><path d="M15 83.5 V87 H18.5" fill="#1e1e1e" stroke="#1e1e1e"></path><path d="M28 86 H33 L34 87 H41 V94 H28 Z" fill="#1e1e1e"></path><rect x="50.6" y="83.6" width="12" height="12.5" fill="#fff" stroke="#1e1e1e" stroke-width="1.2"></rect><rect x="53" y="84" width="6" height="4" fill="#1e1e1e"></rect><rect x="53" y="91" width="7" height="4.5" fill="none" stroke="#1e1e1e" stroke-width="1"></rect><rect x="72.6" y="83.6" width="12" height="12.5" fill="#fff" stroke="#1e1e1e" stroke-width="1.2"></rect><rect x="75" y="84" width="6" height="4" fill="#1e1e1e"></rect><rect x="75" y="91" width="7" height="4.5" fill="none" stroke="#1e1e1e" stroke-width="1"></rect><path d="M78 96 L84 90 L86 92 L80 97 Z" fill="#1e1e1e"></path><rect x="96" y="83.6" width="8" height="4" fill="none" stroke="#1e1e1e" stroke-width="1.1"></rect><rect x="93.6" y="87.6" width="13" height="6" rx="1" fill="#fff" stroke="#1e1e1e" stroke-width="1.2"></rect><rect x="96" y="91.6" width="8" height="4.5" fill="#fff" stroke="#1e1e1e" stroke-width="1.1"></rect><path d="M118 83.5 H124 L127.5 87 V96.5 H120" fill="none" stroke="#1e1e1e" stroke-width="1.1"></path><circle cx="121" cy="90" r="3.6" fill="#fff" stroke="#1e1e1e" stroke-width="1.3"></circle><path d="M118.3 92.7 L115 96" stroke="#1e1e1e" stroke-width="1.6"></path><path d="M113 105 H122 L117.5 110 Z" fill="#1e1e1e"></path><rect x="125" y="103" width="1.4" height="1.4" fill="#777"></rect><rect x="125" y="106" width="1.4" height="1.4" fill="#777"></rect><rect x="125" y="109" width="1.4" height="1.4" fill="#777"></rect><rect x="128" y="103" width="1.4" height="1.4" fill="#777"></rect><rect x="128" y="106" width="1.4" height="1.4" fill="#777"></rect><rect x="128" y="109" width="1.4" height="1.4" fill="#777"></rect><rect x="212" y="103" width="1.4" height="1.4" fill="#777"></rect><rect x="212" y="106" width="1.4" height="1.4" fill="#777"></rect><rect x="212" y="109" width="1.4" height="1.4" fill="#777"></rect><rect x="215" y="103" width="1.4" height="1.4" fill="#777"></rect><rect x="215" y="106" width="1.4" height="1.4" fill="#777"></rect><rect x="215" y="109" width="1.4" height="1.4" fill="#777"></rect><rect x="278" y="103" width="1.4" height="1.4" fill="#777"></rect><rect x="278" y="106" width="1.4" height="1.4" fill="#777"></rect><rect x="278" y="109" width="1.4" height="1.4" fill="#777"></rect><rect x="281" y="103" width="1.4" height="1.4" fill="#777"></rect><rect x="281" y="106" width="1.4" height="1.4" fill="#777"></rect><rect x="281" y="109" width="1.4" height="1.4" fill="#777"></rect><rect x="452" y="103" width="1.4" height="1.4" fill="#777"></rect><rect x="452" y="106" width="1.4" height="1.4" fill="#777"></rect><rect x="452" y="109" width="1.4" height="1.4" fill="#777"></rect><rect x="455" y="103" width="1.4" height="1.4" fill="#777"></rect><rect x="455" y="106" width="1.4" height="1.4" fill="#777"></rect><rect x="455" y="109" width="1.4" height="1.4" fill="#777"></rect><rect x="578" y="103" width="1.4" height="1.4" fill="#777"></rect><rect x="578" y="106" width="1.4" height="1.4" fill="#777"></rect><rect x="578" y="109" width="1.4" height="1.4" fill="#777"></rect><rect x="581" y="103" width="1.4" height="1.4" fill="#777"></rect><rect x="581" y="106" width="1.4" height="1.4" fill="#777"></rect><rect x="581" y="109" width="1.4" height="1.4" fill="#777"></rect><path d="M138 89 H142 L143 90 H149 V96 H138 Z" fill="#1e1e1e"></path><path d="M148 82 V87 M145.5 84.5 H150.5" stroke="#1e1e1e" stroke-width="1"></path><rect x="159" y="91" width="13" height="5" fill="#fff" stroke="#1e1e1e" stroke-width="1.2"></rect><path d="M163.5 91 V96 M167.5 91 V96" stroke="#1e1e1e"></path><path d="M168 82 V87 M165.5 84.5 H170.5" stroke="#1e1e1e" stroke-width="1"></path><rect x="181" y="91" width="13" height="5" fill="#fff" stroke="#1e1e1e" stroke-width="1.2"></rect><path d="M185.5 91 V96 M189.5 91 V96" stroke="#1e1e1e"></path><path d="M190 82 V87 M187.5 84.5 H192.5" stroke="#1e1e1e" stroke-width="1"></path><rect x="159" y="86" width="6" height="4" fill="#fff" stroke="#1e1e1e"></rect><path d="M204 96 L216 84 M208 86 H216 M206 92 H214" stroke="#cfcfcf" stroke-width="1.3"></path><path d="M225 96 L232 89 M233 82 V90" stroke="#cfcfcf" stroke-width="1.3"></path><circle cx="253" cy="90" r="6" fill="none" stroke="#d5d5d5" stroke-width="1.3"></circle><rect x="265" y="79" width="21" height="22" fill="#4f4f4f"></rect><text x="268" y="95" font-size="12" fill="#eee" font-family="Liberation Sans">A</text><path d="M281 84 V96 M278.5 93 L281 96 L283.5 93" stroke="#eee" fill="none" stroke-width="1.2"></path><rect x="291" y="84" width="10" height="12" fill="#fff" stroke="#1e1e1e" stroke-width="1.2"></rect><rect x="294" y="82" width="10" height="12" fill="none" stroke="#1e1e1e" stroke-width="1.2"></rect><circle cx="296" cy="91" r="3" fill="#fff" stroke="#1e1e1e"></circle><rect x="313" y="83" width="10" height="13" fill="#fff" stroke="#1e1e1e" stroke-width="1.2"></rect><path d="M315 87 H321 M315 90 H321 M315 93 H321" stroke="#1e1e1e" stroke-width="1.4"></path><circle cx="324" cy="84" r="2.5" fill="#1e1e1e"></circle><text x="334" y="89" font-size="7" fill="#1e1e1e" font-family="Liberation Sans">1</text><text x="334" y="97" font-size="7" fill="#1e1e1e" font-family="Liberation Sans">2</text><path d="M337 95 L342 85" stroke="#1e1e1e"></path><path d="M342 89 L347 83 L348 85 L343 90 Z" fill="#1e1e1e"></path><rect x="356" y="83" width="9" height="5" fill="#fff" stroke="#1e1e1e" stroke-width="1.1"></rect><rect x="359" y="90" width="10" height="6" fill="#fff" stroke="#1e1e1e" stroke-width="1.1"></rect><path d="M363 90 V96 M356 88 V93 H359" stroke="#1e1e1e" fill="none"></path><path d="M378 96 H391 M380 96 V86 M385 96 V84 M389 96 V88 M378 90 H391" stroke="#cfcfcf" stroke-width="1.2"></path><rect x="399" y="84" width="11" height="12" fill="none" stroke="#cfcfcf" stroke-width="1.3"></rect><path d="M403 92 L412 83" stroke="#cfcfcf" stroke-width="1.3"></path><path d="M432 84 H423 L428 90 L423 96 H432" stroke="#111" stroke-width="1.6" fill="none"></path><path d="M442 83 H456 M445 83 V96 M453 83 V96 M442 96 H456" stroke="#cfcfcf" stroke-width="1.3"></path></svg>
<div class="a" style="left:3px;top:114px;width:634px;height:586px;background:#ffffff;"></div>
<div class="a" style="left:0px;top:114px;width:3px;height:588px;background:#4f5860;"></div>
<div class="a" style="left:17px;top:114px;width:2px;height:586px;background:#7e9fb3;"></div>
<div class="a" style="left:33px;top:114px;width:2px;height:586px;background:#7e9fb3;"></div>
<div class="a" style="left:54px;top:114px;width:2px;height:586px;background:#3b84bf;"></div>
<div class="a" style="left:238px;top:114px;width:2px;height:586px;background:#3b84bf;"></div>
<div class="a" style="left:403px;top:114px;width:2px;height:586px;background:#5f96b4;"></div>
<div class="a" style="left:429px;top:114px;width:2px;height:586px;background:#5f96b4;"></div>
<div class="a" style="left:3px;top:152px;width:485px;height:2px;background:repeating-linear-gradient(90deg,#3a3a3a 0 2px,transparent 2px 4px)"></div>
<div class="a" style="left:488px;top:153px;width:149px;height:1px;background:#888;"></div>
<div class="a" style="left:3px;top:173px;width:485px;height:2px;background:#b4b4b4;"></div>
<div class="a" style="left:3px;top:194px;width:485px;height:2px;background:#5a5a5a;"></div>
<div class="a" style="left:3px;top:215px;width:485px;height:2px;background:#b4b4b4;"></div>
<div class="a" style="left:3px;top:236px;width:485px;height:2px;background:#5a5a5a;"></div>
<div class="a" style="left:3px;top:257px;width:485px;height:2px;background:#b4b4b4;"></div>
<div class="a" style="left:3px;top:278px;width:485px;height:2px;background:#5a5a5a;"></div>
<div class="a" style="left:3px;top:299px;width:485px;height:2px;background:#b4b4b4;"></div>
<div class="a" style="left:3px;top:320px;width:485px;height:2px;background:#5a5a5a;"></div>
<div class="a" style="left:3px;top:341px;width:485px;height:2px;background:#b4b4b4;"></div>
<div class="a" style="left:3px;top:362px;width:485px;height:2px;background:#5a5a5a;"></div>
<div class="a" style="left:3px;top:383px;width:485px;height:2px;background:#b4b4b4;"></div>
<div class="a" style="left:3px;top:404px;width:485px;height:2px;background:#5a5a5a;"></div>
<div class="a" style="left:3px;top:425px;width:485px;height:2px;background:#b4b4b4;"></div>
<div class="a" style="left:3px;top:446px;width:485px;height:2px;background:#5a5a5a;"></div>
<div class="a" style="left:3px;top:467px;width:485px;height:2px;background:#b4b4b4;"></div>
<div class="a" style="left:3px;top:488px;width:485px;height:2px;background:#5a5a5a;"></div>
<div class="a" style="left:3px;top:509px;width:485px;height:2px;background:#b4b4b4;"></div>
<div class="a" style="left:3px;top:530px;width:485px;height:2px;background:#5a5a5a;"></div>
<div class="a" style="left:3px;top:551px;width:485px;height:2px;background:#b4b4b4;"></div>
<div class="a" style="left:3px;top:572px;width:485px;height:2px;background:#5a5a5a;"></div>
<div class="a" style="left:3px;top:593px;width:485px;height:2px;background:#b4b4b4;"></div>
<div class="a" style="left:3px;top:614px;width:485px;height:2px;background:#5a5a5a;"></div>
<div class="a" style="left:3px;top:635px;width:485px;height:2px;background:#b4b4b4;"></div>
<div class="a" style="left:3px;top:656px;width:485px;height:2px;background:#5a5a5a;"></div>
<div class="a" style="left:3px;top:677px;width:485px;height:2px;background:#b4b4b4;"></div>
<div class="a" style="left:3px;top:698px;width:485px;height:2px;background:#5a5a5a;"></div>
<div class="a" style="left:624px;top:168px;width:13px;height:532px;background:#efefef;"></div>
<div class="a" style="left:624px;top:168px;width:13px;height:13px;background:#cbcbcb;"></div>
<svg width="640" height="720" style="left:0;top:0"><path d="M627 163 L630.5 159.5 L634 163" fill="none" stroke="#555" stroke-width="1.2"></path><path d="M627 690 L630.5 693.5 L634 690" fill="none" stroke="#555" stroke-width="1.2"></path></svg>
<div class="g" style="left: 106px; top: 126.4px; font-size: 15.5px; line-height: 18.6px; color: rgb(30, 30, 30); transform: scaleX(0.821);">Обозначение</div>
<div class="g" style="left: 277px; top: 126.4px; font-size: 15.5px; line-height: 18.6px; color: rgb(30, 30, 30); transform: scaleX(0.804);">Наименование</div>
<div class="g" style="left: 435px; top: 117.4px; font-size: 15.5px; line-height: 18.6px; color: rgb(30, 30, 30); transform: scaleX(0.851);">Приме-</div>
<div class="g" style="left: 436px; top: 136.4px; font-size: 15.5px; line-height: 18.6px; color: rgb(30, 30, 30); transform: scaleX(0.825);">чание</div>
<div class="gr" style="left: 10px; top: 135px; font-size: 11px; line-height: 11px; color: rgb(80, 80, 80); transform: translate(-50%, -50%) rotate(-90deg) scaleX(0.755);">Формат</div>
<div class="gr" style="left: 26px; top: 136px; font-size: 11px; line-height: 11px; color: rgb(80, 80, 80); transform: translate(-50%, -50%) rotate(-90deg) scaleX(0.759);">Зона</div>
<div class="gr" style="left: 44px; top: 134px; font-size: 11px; line-height: 11px; color: rgb(80, 80, 80); transform: translate(-50%, -50%) rotate(-90deg) scaleX(0.677);">Поз.</div>
<div class="gr" style="left: 417px; top: 133px; font-size: 11px; line-height: 11px; color: rgb(80, 80, 80); transform: translate(-50%, -50%) rotate(-90deg) scaleX(0.832);">Кол.</div>
<div class="a" style="left:274px;top:191.0px;width:91px;height:1px;background:#3a3a3a"></div>
<div class="g" style="left: 274px; top: 176.4px; font-size: 15.5px; line-height: 18.6px; color: rgb(30, 30, 30); transform: scaleX(0.831);">Документация</div>
<div class="g" style="left: 6px; top: 221.2px; font-size: 11px; line-height: 13.2px; color: rgb(30, 30, 30); transform: scaleX(0.52);">А2</div>
<div class="g" style="left: 58px; top: 218.4px; font-size: 15.5px; line-height: 18.6px; color: rgb(30, 30, 30); transform: scaleX(0.824);">АБВГ.000 СБ</div>
<div class="g" style="left: 241px; top: 218.4px; font-size: 15.5px; line-height: 18.6px; color: rgb(30, 30, 30); transform: scaleX(0.81);">Сборочный чертеж</div>
<div class="a" style="left:296px;top:317.0px;width:48px;height:1px;background:#3a3a3a"></div>
<div class="g" style="left: 296px; top: 302.4px; font-size: 15.5px; line-height: 18.6px; color: rgb(30, 30, 30); transform: scaleX(0.829);">Детали</div>
<div class="g" style="left:41px;top:343.4px;font-size:15.5px;line-height:18.6px;color:#1e1e1e;">1</div>
<div class="g" style="left: 58px; top: 343.4px; font-size: 15.5px; line-height: 18.6px; color: rgb(30, 30, 30); transform: scaleX(0.826);">АБВГ.001</div>
<div class="g" style="left: 240px; top: 343.4px; font-size: 15.5px; line-height: 18.6px; color: rgb(30, 30, 30); transform: scaleX(0.801);">Плита</div>
<div class="g" style="left:413px;top:343.4px;font-size:15.5px;line-height:18.6px;color:#1e1e1e;">1</div>
<div class="a" style="left:251px;top:443.0px;width:137px;height:1px;background:#3a3a3a"></div>
<div class="g" style="left: 251px; top: 428.4px; font-size: 15.5px; line-height: 18.6px; color: rgb(30, 30, 30); transform: scaleX(0.803);">Стандартные изделия</div>
<div class="g" style="left:39px;top:469.4px;font-size:15.5px;line-height:18.6px;color:#1e1e1e;">4</div>
<div class="g" style="left: 241px; top: 469.4px; font-size: 15.5px; line-height: 18.6px; color: rgb(30, 30, 30); transform: scaleX(0.826);">Болт М24х110 ISO 4014</div>
<div class="g" style="left:412px;top:469.4px;font-size:15.5px;line-height:18.6px;color:#1e1e1e;">4</div>
<div class="g" style="left:39px;top:490.4px;font-size:15.5px;line-height:18.6px;color:#1e1e1e;">5</div>
<div class="g" style="left: 241px; top: 490.4px; font-size: 15.5px; line-height: 18.6px; color: rgb(30, 30, 30); transform: scaleX(0.86);">Гайка М24 ISO 7719</div>
<div class="g" style="left:412px;top:490.4px;font-size:15.5px;line-height:18.6px;color:#1e1e1e;">4</div>
<div class="g" style="left:39px;top:511.4px;font-size:15.5px;line-height:18.6px;color:#1e1e1e;">6</div>
<div class="g" style="left: 241px; top: 511.4px; font-size: 15.5px; line-height: 18.6px; color: rgb(30, 30, 30); transform: scaleX(0.791);">Шайба плоская 24 ISO 7089</div>
<div class="g" style="left:412px;top:511.4px;font-size:15.5px;line-height:18.6px;color:#1e1e1e;">4</div>
<div class="g" style="left:39px;top:532.4px;font-size:15.5px;line-height:18.6px;color:#1e1e1e;">7</div>
<div class="g" style="left: 241px; top: 532.4px; font-size: 15.5px; line-height: 18.6px; color: rgb(30, 30, 30); transform: scaleX(0.875);">Шайба 24 ГОСТ 6402-70</div>
<div class="g" style="left:412px;top:532.4px;font-size:15.5px;line-height:18.6px;color:#1e1e1e;">4</div>
<div class="a" style="left:272px;top:632.0px;width:96px;height:1px;background:#3a3a3a"></div>
<div class="g" style="left: 272px; top: 617.4px; font-size: 15.5px; line-height: 18.6px; color: rgb(30, 30, 30); transform: scaleX(0.833);">Прочие изделия</div>
<div class="g" style="left: 37px; top: 659.4px; font-size: 15.5px; line-height: 18.6px; color: rgb(30, 30, 30); transform: scaleX(0.696);">10</div>
<div class="g" style="left: 240px; top: 660.9px; font-size: 13px; line-height: 15.6px; color: rgb(30, 30, 30); transform: scaleX(0.438);">Цилиндрический редуктор R107AM132S-M  SEW Eurodrive1</div>
<div class="g" style="left:413px;top:659.4px;font-size:15.5px;line-height:18.6px;color:#1e1e1e;">1</div>
<div class="a" style="left:0px;top:702px;width:640px;height:18px;background:#000;"></div>
</div>

</body></html>
